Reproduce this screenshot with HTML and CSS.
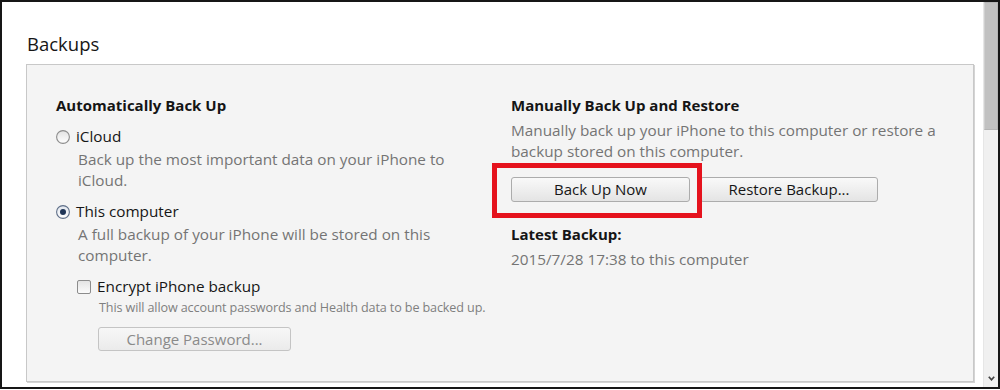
FILE: index.html
```html
<!DOCTYPE html>
<html lang="en">
<head>
<meta charset="utf-8">
<title>Backups</title>
<link rel="stylesheet" href="styles.css">
</head>
<body>
<div class="frame">
  <main class="content">
    <h1 class="title">Backups</h1>
    <section class="panel">
      <div class="col">
        <h2 class="heading">Automatically Back Up</h2>
        <div class="option">
          <svg class="radio" viewBox="0 0 14 14"><defs><linearGradient id="rg1" x1="0" y1="0" x2="0" y2="1"><stop offset="0" stop-color="#e2e2e2"/><stop offset="1" stop-color="#ffffff"/></linearGradient></defs><circle cx="7" cy="7" r="6.4" fill="url(#rg1)" stroke="#8c8c8c" stroke-width="1.1"/></svg>
          <span>iCloud</span>
        </div>
        <p class="desc">Back up the most important data on your iPhone to<br>iCloud.</p>
        <div class="option">
          <svg class="radio" viewBox="0 0 14 14"><defs><linearGradient id="rg2" x1="0" y1="0" x2="0" y2="1"><stop offset="0" stop-color="#dfe4ec"/><stop offset="1" stop-color="#ffffff"/></linearGradient></defs><circle cx="7" cy="7" r="6.4" fill="url(#rg2)" stroke="#5f6f88" stroke-width="1.1"/><circle cx="7" cy="7" r="3" fill="#1f3557"/></svg>
          <span>This computer</span>
        </div>
        <p class="desc">A full backup of your iPhone will be stored on this<br>computer.</p>
        <div class="check-row">
          <span class="checkbox"></span>
          <span>Encrypt iPhone backup</span>
        </div>
        <p class="note">This will allow account passwords and Health data to be backed up.</p>
        <div class="btn btn-disabled">Change Password...</div>
      </div>
      <div class="col">
        <h2 class="heading">Manually Back Up and Restore</h2>
        <p class="desc desc-right">Manually back up your iPhone to this computer or restore a<br>backup stored on this computer.</p>
        <div class="btn-row">
          <div class="btn btn-backup">Back Up Now<span class="highlight"></span></div>
          <div class="btn btn-restore">Restore Backup...</div>
        </div>
        <h2 class="heading heading-latest">Latest Backup:</h2>
        <p class="desc desc-right">2015/7/28 17:38 to this computer</p>
      </div>
    </section>
  </main>
  <div class="scrollbar">
    <div class="thumb"></div>
    <div class="track"></div>
    <div class="arrow-btn">
      <svg class="arrow" viewBox="0 0 7 5"><polyline points="0.8,0.8 3.5,3.8 6.2,0.8" fill="none" stroke="#444" stroke-width="1.7"/></svg>
    </div>
  </div>
</div>
</body>
</html>
```
FILE: styles.css
```css
* {
  box-sizing: border-box;
  margin: 0;
  padding: 0;
}

body {
  width: 1000px;
  height: 390px;
  background: #ffffff;
  font-family: "Open Sans", "Noto Sans", sans-serif;
  overflow: hidden;
}

.frame {
  display: flex;
  width: 1000px;
  height: 389px;
  border: 2px solid #161616;
  background: #ffffff;
}

.content {
  flex: 1;
  padding: 29px 9px 0 24px;
}

.title {
  font-size: 18.5px;
  font-weight: 400;
  line-height: 26px;
  color: #161616;
  padding-left: 1px;
}

.panel {
  margin-top: 7px;
  height: 318px;
  border: 1px solid #c8c8c8;
  box-shadow: 1px 1px 0 #d4d4d4;
  background: #f4f4f4;
  display: grid;
  grid-template-columns: 455px 1fr;
  align-items: start;
  padding: 30px 0 0 29px;
}

.col {
  display: flex;
  flex-direction: column;
  align-items: flex-start;
}

.heading {
  font-size: 15px;
  font-weight: 700;
  line-height: 21px;
  color: #151515;
}

.option {
  display: flex;
  align-items: center;
  gap: 6px;
  margin-top: 10px;
  font-size: 15.3px;
  line-height: 21px;
  color: #161616;
}

.radio {
  width: 14px;
  height: 14px;
  flex: none;
}

.desc {
  margin: 2px 0 0 22px;
  font-size: 15.3px;
  line-height: 21px;
  color: #747474;
}

.desc-right {
  margin: 4px 0 0 0;
}

.check-row {
  display: flex;
  align-items: center;
  gap: 6px;
  margin: 10px 0 0 21px;
  font-size: 15.3px;
  line-height: 21px;
  color: #161616;
}

.checkbox {
  width: 14px;
  height: 14px;
  flex: none;
  border: 1px solid #8c8c8c;
  border-radius: 2px;
  background: linear-gradient(#e4e4e4, #fbfbfb);
}

.note {
  margin: 2px 0 0 43px;
  font-size: 12.6px;
  line-height: 18px;
  letter-spacing: -0.12px;
  color: #7f7f7f;
}

.btn {
  height: 25px;
  border: 1px solid #acacac;
  border-radius: 3px;
  background: linear-gradient(#f9f9f9, #e4e4e4);
  font-size: 15px;
  line-height: 23px;
  color: #161616;
  text-align: center;
}

.btn-disabled {
  width: 193px;
  height: 24px;
  line-height: 22px;
  margin: 10px 0 0 42px;
  color: #8a8a8a;
  border-color: #c4c4c4;
  background: linear-gradient(#f7f7f7, #ebebeb);
}

.btn-row {
  display: flex;
  gap: 10px;
  margin-top: 15px;
}

.btn-backup {
  position: relative;
  width: 179px;
}

.btn-restore {
  width: 178px;
}

.highlight {
  position: absolute;
  left: -20px;
  top: -15px;
  width: 210px;
  height: 55px;
  border: 5px solid #e5121d;
}

.heading-latest {
  margin-top: 22px;
}

.scrollbar {
  width: 15px;
  flex: none;
  display: flex;
  flex-direction: column;
  background: #f0f0f0;
  border-left: 1px solid #e6e6e6;
}

.thumb {
  height: 128px;
  background: #c1c1c1;
  border: 1px solid #b4b4b4;
  border-left-color: #cfcfcf;
}

.track {
  flex: 1;
}

.arrow-btn {
  height: 17px;
  display: flex;
  align-items: center;
  justify-content: center;
}

.arrow {
  width: 7px;
  height: 5px;
}
```
